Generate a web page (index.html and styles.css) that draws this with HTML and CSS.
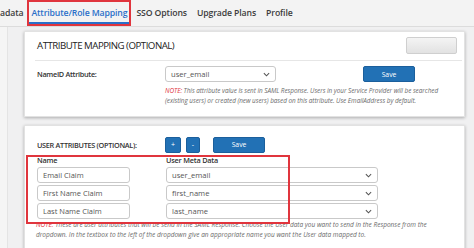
FILE: index.html
```html
<!DOCTYPE html>
<html>
<head>
<meta charset="utf-8">
<link rel="stylesheet" href="styles.css">
</head>
<body>
<nav class="tabs">
  <span class="tab tab-cut">adata</span>
  <span class="tab tab-active">Attribute/Role Mapping</span>
  <span class="tab">SSO Options</span>
  <span class="tab">Upgrade Plans</span>
  <span class="tab">Profile</span>
</nav>
<div class="page">
  <div class="gutter"></div>
  <main class="main">
    <section class="card card-map">
      <div class="card-head">
        <h2 class="title">ATTRIBUTE MAPPING (OPTIONAL)</h2>
        <button class="btn-ghost" type="button"></button>
      </div>
      <div class="field-row">
        <label class="field-label">NameID Attribute:</label>
        <div class="field-body">
          <div class="field-controls">
            <div class="select select-sm"><span>user_email</span><svg class="chev" viewBox="0 0 8 5" width="7" height="5"><path d="M1 1l3 3 3-3" fill="none" stroke="#555" stroke-width="1.2"/></svg></div>
            <button class="btn-primary btn-save-map" type="button">Save</button>
          </div>
          <p class="note"><span class="note-tag">NOTE:</span> This attribute value is sent in SAML Response. Users in your Service Provider will be searched<br>(existing users) or created (new users) based on this attribute. Use EmailAddress by default.</p>
        </div>
      </div>
    </section>
    <section class="card card-attrs">
      <div class="attrs-head">
        <span class="field-label">USER ATTRIBUTES (OPTIONAL):</span>
        <div class="head-btns">
          <button class="btn-primary btn-sq btn-plus" type="button">+</button>
          <button class="btn-primary btn-sq btn-minus" type="button">-</button>
          <button class="btn-primary btn-save-attrs" type="button">Save</button>
        </div>
      </div>
      <div class="attrs-table">
        <div class="attr-row attr-heads">
          <span class="col-name">Name</span>
          <span class="col-meta">User Meta Data</span>
        </div>
        <div class="attr-row">
          <div class="input col-name">Email Claim</div>
          <div class="select select-lg"><span>user_email</span><svg class="chev" viewBox="0 0 8 5" width="7" height="5"><path d="M1 1l3 3 3-3" fill="none" stroke="#555" stroke-width="1.2"/></svg></div>
        </div>
        <div class="attr-row">
          <div class="input col-name">First Name Claim</div>
          <div class="select select-lg"><span>first_name</span><svg class="chev" viewBox="0 0 8 5" width="7" height="5"><path d="M1 1l3 3 3-3" fill="none" stroke="#555" stroke-width="1.2"/></svg></div>
        </div>
        <div class="attr-row">
          <div class="input col-name">Last Name Claim</div>
          <div class="select select-lg"><span>last_name</span><svg class="chev" viewBox="0 0 8 5" width="7" height="5"><path d="M1 1l3 3 3-3" fill="none" stroke="#555" stroke-width="1.2"/></svg></div>
        </div>
      </div>
      <p class="note note-wide"><span class="note-tag">NOTE:</span> These are user attributes that will be send in the SAML Response. Choose the User data you want to send in the Response from the<br>dropdown. In the textbox to the left of the dropdown give an appropriate name you want the User data mapped to.</p>
      <div class="highlight"></div>
    </section>
  </main>
</div>
</body>
</html>
```

FILE: styles.css
```css
* { box-sizing: border-box; }
html, body { margin: 0; padding: 0; }
body {
  width: 474px;
  height: 248px;
  overflow: hidden;
  background: #f0f0f1;
  font-family: "Open Sans", "Noto Sans", sans-serif;
  color: #333;
}

.tabs {
  display: flex;
  align-items: stretch;
  height: 27px;
  background: #f3f3f3;
  border-bottom: 1px solid #dcdcdc;
}
.tab {
  display: flex;
  align-items: center;
  padding: 0 5px;
  font-size: 8.7px;
  font-weight: 600;
  color: #3c3c3c;
  letter-spacing: -0.12px;
  white-space: nowrap;
}
.tab-cut { padding: 0 4px 0 0; }
.tab-active {
  color: #2a6fc9;
  padding: 0 2px 0 2px;
  border: 2px solid #e0353d;
  box-shadow: inset 0 -2px 0 #2a6fc9;
}

.page {
  display: flex;
  align-items: flex-start;
}
.gutter {
  width: 8px;
  height: 221px;
  background: #f5f5f5;
  border-right: 1px solid #e4e4e4;
}
.main {
  margin-left: 16px;
  width: 441px;
  display: flex;
  flex-direction: column;
  gap: 8px;
  padding-top: 4px;
}

.card {
  position: relative;
  background: #fff;
  box-shadow: 0 1px 3px rgba(0,0,0,0.28);
  border: 1px solid #e2e2e2;
}
.card-map {
  padding: 3px 2px 14px 10px;
  height: 86px;
}
.card-head {
  display: flex;
  align-items: center;
  justify-content: space-between;
  height: 20px;
  padding: 0 5px 5px 2px;
  box-sizing: content-box;
  border-bottom: 1px solid #e6e6e6;
}
.title {
  margin: 0;
  font-size: 9.7px;
  font-weight: 400;
  color: #222;
  letter-spacing: -0.5px;
}
.btn-ghost {
  width: 51px;
  height: 17px;
  border: 1px solid #cfcfcf;
  border-radius: 2px;
  background: linear-gradient(#f4f4f4, #e2e2e2);
  padding: 0;
}

.field-row {
  display: flex;
  align-items: flex-start;
  padding: 5px 0 0 2px;
}
.field-label {
  width: 128px;
  flex: none;
  font-size: 7.3px;
  font-weight: 600;
  color: #333;
  letter-spacing: -0.3px;
}
.field-row .field-label { line-height: 16px; }
.field-body { display: flex; flex-direction: column; }
.field-controls { display: flex; align-items: center; gap: 87px; }

.select {
  display: flex;
  align-items: center;
  justify-content: space-between;
  height: 16px;
  padding: 0 5px 0 5px;
  border: 1px solid #c9c9c9;
  border-radius: 3px;
  background: #fff;
  font-size: 7.6px;
  color: #555;
}
.select-sm { width: 111px; }
.select-lg { width: 212px; }
.chev { flex: none; }

.btn-primary {
  background: #2271b5;
  border: 1px solid #1b5f9c;
  border-radius: 2px;
  color: #fff;
  font-family: inherit;
  font-size: 6.8px;
  padding: 0;
  height: 16px;
}
.btn-save-map { width: 52px; }

.note {
  margin: 4px 0 0;
  font-size: 6.4px;
  line-height: 9.5px;
  font-style: italic;
  color: #6b6b6b;
  white-space: nowrap;
  letter-spacing: -0.05px;
}
.note-tag { color: #e0353d; }

.card-attrs {
  padding: 10px 0 10px 11px;
  height: 130px;
}
.attrs-head {
  display: flex;
  align-items: center;
  height: 17px;
  padding-left: 1px;
}
.head-btns { display: flex; gap: 5px; }
.btn-sq { width: 16px; font-size: 7px; }
.btn-minus { width: 14px; }
.btn-save-attrs { width: 52px; margin-left: 8px; }

.attrs-table {
  display: flex;
  flex-direction: column;
  gap: 2px;
  padding: 2px 0 0 1px;
}
.attr-row { display: flex; align-items: center; }
.attr-heads {
  font-size: 7.3px;
  font-weight: 600;
  color: #333;
  letter-spacing: -0.2px;
  height: 10px;
}
.col-name { width: 93px; margin-right: 36px; }
.input {
  height: 16px;
  border: 1px solid #c9c9c9;
  border-radius: 3px;
  padding: 0 5px;
  display: flex;
  align-items: center;
  font-size: 7.5px;
  color: #555;
  white-space: nowrap;
}
.note-wide {
  margin-top: 1px;
  font-size: 6.5px;
  line-height: 10px;
  letter-spacing: 0;
}

.highlight {
  position: absolute;
  left: 1px;
  top: 29px;
  width: 264px;
  height: 69px;
  border: 2px solid #e0353d;
  pointer-events: none;
}
```
